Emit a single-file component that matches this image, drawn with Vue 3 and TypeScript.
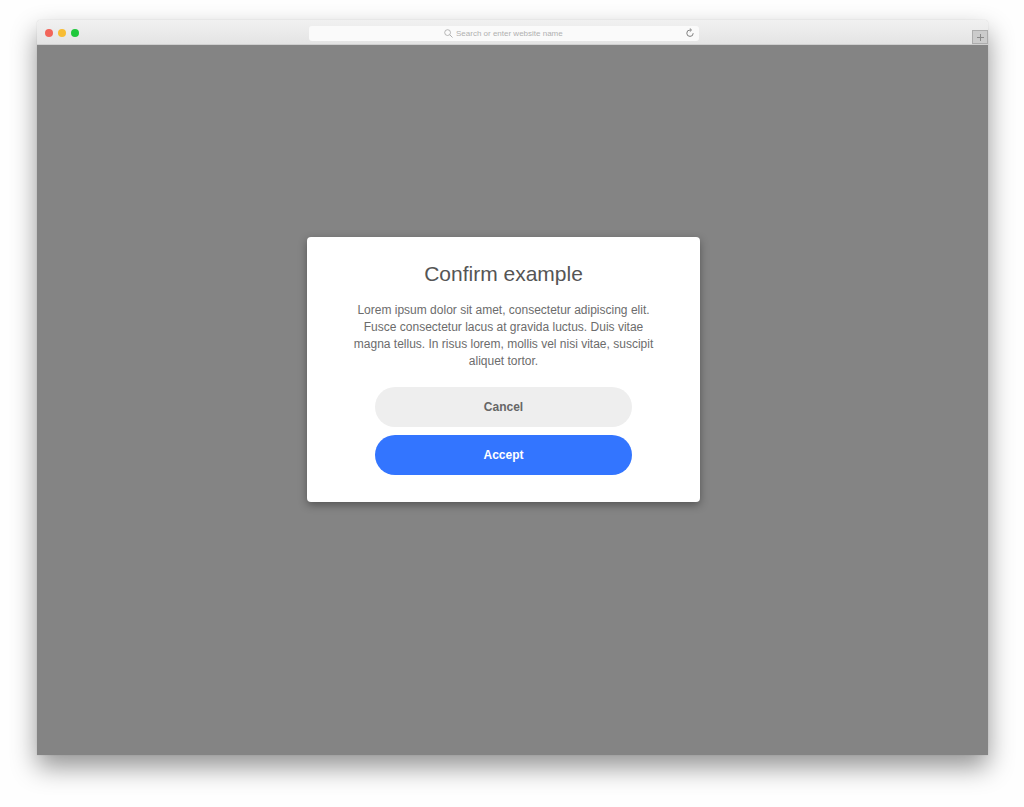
<script setup lang="ts">
import { ref } from 'vue'

const address = ref('')
const lights: string[] = ['close', 'minimise', 'zoom']
</script>

<template>
  <div class="desktop">
    <div class="window">
      <header class="toolbar">
        <div class="lights">
          <button
            v-for="light in lights"
            :key="light"
            type="button"
            :class="['light', light]"
            :aria-label="light"
          ></button>
        </div>
        <form class="address" @submit.prevent>
          <label class="search" for="address">
            <svg width="9" height="9" viewBox="0 0 9 9" fill="none" stroke="#a6a6a6" aria-hidden="true">
              <circle cx="3.6" cy="3.6" r="2.9" stroke-width="0.8" />
              <path d="M5.8 5.8 8.5 8.5" stroke-width="0.9" />
            </svg>
          </label>
          <input
            id="address"
            v-model="address"
            type="text"
            placeholder="Search or enter website name"
            aria-label="Website address"
          />
          <button class="reload" type="submit" aria-label="Reload">
            <svg width="10" height="10" viewBox="0 0 10 10" fill="none" stroke="#808080" aria-hidden="true">
              <path d="M8.2 5.2A3.2 3.2 0 1 1 5 2h1" stroke-width="1" />
              <path d="M4.8.4 6.6 2 4.8 3.7" stroke-width="0.9" />
            </svg>
          </button>
        </form>
        <button class="new-tab" type="button" aria-label="New tab">
          <svg width="9" height="9" viewBox="0 0 9 9" stroke="#8a8a8a" aria-hidden="true">
            <path d="M4.5 1v7M1 4.5h7" stroke-width="1" />
          </svg>
        </button>
      </header>
      <main class="page">
        <section class="dialog" role="dialog" aria-labelledby="title" aria-describedby="message">
          <h1 id="title">Confirm example</h1>
          <p id="message">
            Lorem ipsum dolor sit amet, consectetur adipiscing elit. Fusce consectetur lacus at
            gravida luctus. Duis vitae magna tellus. In risus lorem, mollis vel nisi vitae, suscipit
            aliquet tortor.
          </p>
          <div class="actions">
            <button class="action cancel" type="button">Cancel</button>
            <button class="action accept" type="button">Accept</button>
          </div>
        </section>
      </main>
    </div>
  </div>
</template>

<style>
body {
  background: #fefefe;
}
</style>

<style scoped>
.desktop {
  box-sizing: border-box;
  min-height: 100vh;
  padding: 20px 36px 52px 37px;
  display: flex;
  font-family: 'Liberation Sans', Arial, sans-serif;
}

button {
  margin: 0;
  padding: 0;
  border: 0;
  font-family: inherit;
}

svg {
  display: block;
}

.window {
  flex: 1;
  display: flex;
  flex-direction: column;
  border-radius: 4px 4px 0 0;
  box-shadow: 0 0 1px rgba(0, 0, 0, 0.25), 0 12px 26px rgba(0, 0, 0, 0.42);
}

.toolbar {
  box-sizing: border-box;
  height: 25px;
  display: grid;
  grid-template-columns: 1fr 390px 1fr;
  align-items: center;
  padding-right: 17px;
  border-bottom: 1px solid #cfcfcf;
  border-radius: 4px 4px 0 0;
  background: linear-gradient(#f1f1f1, #e4e4e4);
}

.lights {
  display: flex;
  gap: 5px;
  padding: 2px 0 0 8px;
}

.light {
  width: 8px;
  height: 8px;
  border-radius: 50%;
}

.close {
  background: #f2655a;
}

.minimise {
  background: #f8bd34;
}

.zoom {
  background: #1fc83c;
}

.address {
  display: flex;
  align-items: center;
  justify-content: flex-end;
  height: 15px;
  margin-top: 2px;
  border-radius: 3px;
  background: #fafafa;
}

.search {
  padding-right: 3px;
}

.address input {
  width: 229px;
  height: 13px;
  padding: 0;
  border: 0;
  outline: 0;
  background: transparent;
  color: #666;
  font: 8px 'Liberation Sans', Arial, sans-serif;
}

.address input::placeholder {
  color: #b0b0b0;
  opacity: 1;
}

.reload {
  margin-right: 4px;
  background: transparent;
}

.new-tab {
  display: grid;
  place-items: center;
  align-self: end;
  justify-self: end;
  width: 16px;
  height: 14px;
  margin-right: -17px;
  border: 1px solid #acacac;
  background: #cbcbcb;
}

.page {
  flex: 1;
  display: flex;
  align-items: center;
  justify-content: center;
  padding: 0 18px 61px 0;
  background: #848484;
}

.dialog {
  box-sizing: border-box;
  width: 393px;
  padding: 25px 40px 27px;
  border-radius: 4px;
  background: #fff;
  box-shadow: 0 3px 8px rgba(0, 0, 0, 0.36);
  text-align: center;
}

h1 {
  margin: 0 0 16px;
  color: #555;
  font-size: 21px;
  font-weight: 400;
  line-height: 24px;
}

p {
  margin: 0 0 17px;
  color: #6c6c6c;
  font-size: 12px;
  line-height: 17px;
}

.actions {
  display: flex;
  flex-direction: column;
  align-items: center;
  gap: 8px;
}

.action {
  width: 257px;
  height: 40px;
  border-radius: 20px;
  font-size: 12px;
  font-weight: 700;
}

.cancel {
  background: #eee;
  color: #666;
}

.accept {
  background: #3375ff;
  color: #fff;
}
</style>
